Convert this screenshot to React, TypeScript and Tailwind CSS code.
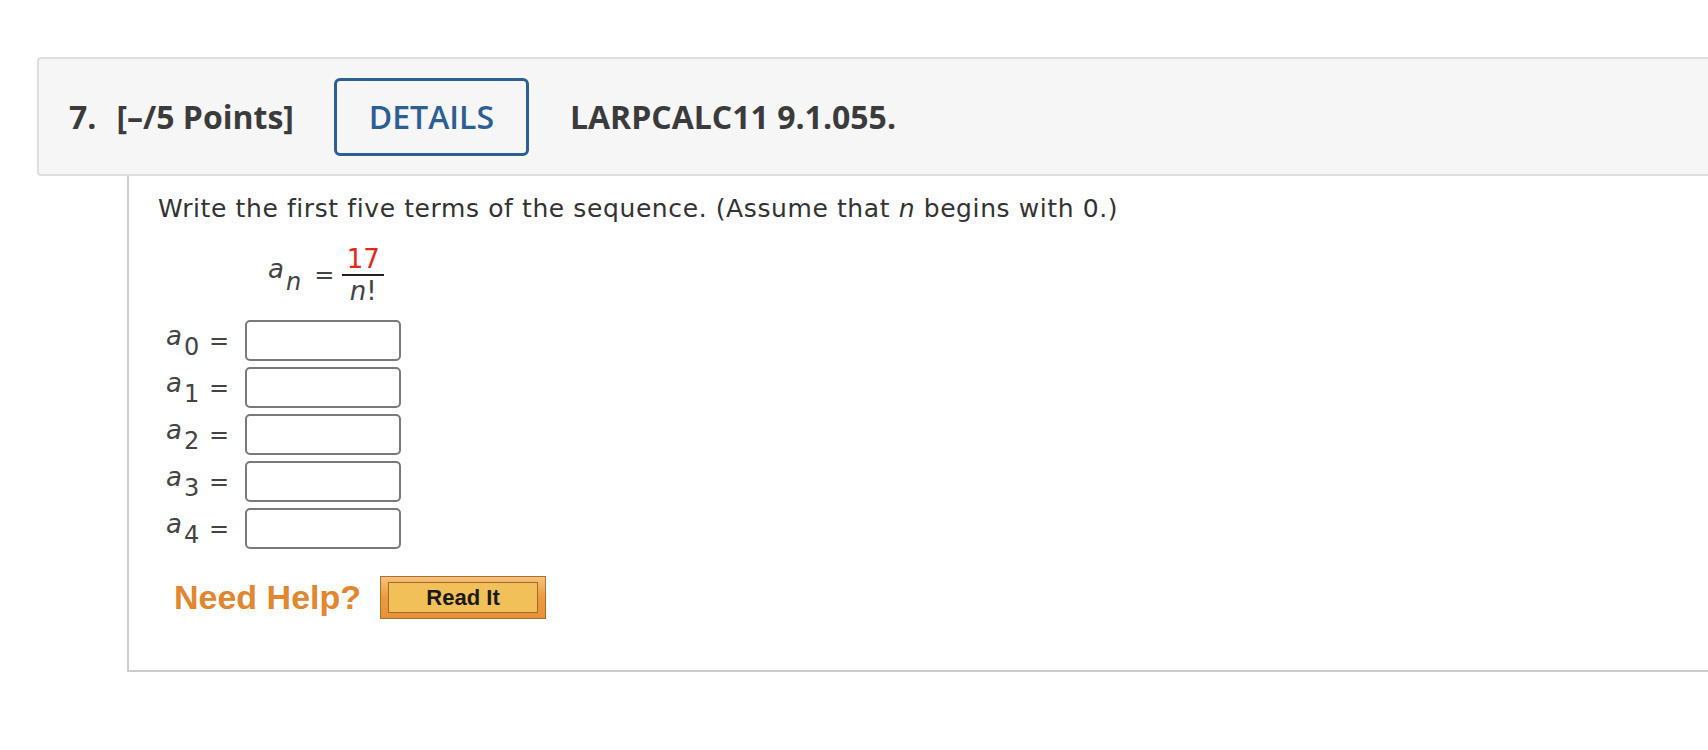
import React from "react";

const terms = [0, 1, 2, 3, 4];

export default function App() {
  return (
    <div className="h-[750px] w-full overflow-hidden bg-white pl-[37px] pt-[57px]">
      {/* question header */}
      <div className="flex h-[119px] w-[1720px] items-center rounded-[4px] border-2 border-[#dedede] bg-[#f6f6f6] pl-[30px] font-['Open_Sans',sans-serif] text-[32px] font-bold text-[#3b3b3b]">
        <span>7.</span>
        <span className="ml-[20px]">[–/5 Points]</span>
        <button
          type="button"
          className="ml-[40px] h-[78px] w-[195px] rounded-[6px] border-[3px] border-[#2c5f93] font-semibold text-[#2c5f93]"
        >
          DETAILS
        </button>
        <span className="ml-[41px]">LARPCALC11 9.1.055.</span>
      </div>

      {/* question body */}
      <div className="ml-[90px] h-[496px] w-[1600px] border-2 border-t-0 border-[#cccccc] pl-[29px] pt-[18px] font-['DejaVu_Sans',sans-serif] text-[#333333]">
        <p className="text-[25px] leading-[30px] tracking-[0.6px]">
          Write the first five terms of the sequence. (Assume that <i>n</i> begins with 0.)
        </p>

        <div className="ml-[110px] mt-[20px] flex items-center text-[26px] text-[#444444]">
          <span className="italic">
            a<span className="ml-[2px] align-[-12px] text-[24px]">n</span>
          </span>
          <span className="ml-[13px] text-[24px]">=</span>
          <span className="ml-[8px] inline-flex flex-col items-center">
            <span className="leading-[30px] text-[#e8271c]">17</span>
            <span className="h-[2px] w-[42px] bg-[#222222]" />
            <span className="leading-[30px] italic">
              n<span className="not-italic">!</span>
            </span>
          </span>
        </div>

        <div className="mt-[14px] flex flex-col gap-[6px] pl-[8px]">
          {terms.map((t) => (
            <div key={t} className="flex h-[41px] items-center text-[26px] text-[#444444]">
              <span className="w-[43px] italic">
                a<span className="ml-[2px] align-[-10px] text-[24px] not-italic">{t}</span>
              </span>
              <span className="text-[24px]">=</span>
              <input
                type="text"
                className="ml-[16px] h-[41px] w-[156px] rounded-[5px] border-2 border-[#7a7a7a] bg-white"
              />
            </div>
          ))}
        </div>

        <div className="mt-[23px] flex items-center pl-[16px]">
          <span className="font-['Liberation_Sans',sans-serif] text-[34px] font-bold text-[#e2862f]">
            Need Help?
          </span>
          <button
            type="button"
            className="ml-[19px] h-[43px] w-[166px] border border-[#b0702a] bg-gradient-to-b from-[#f5c27a] via-[#ec9a3e] to-[#e8923a] px-[7px] py-[5px]"
          >
            <span className="flex h-full w-full items-center justify-center border border-[#a5692a] bg-[#f2c058] font-['Liberation_Sans',sans-serif] text-[22px] font-bold text-[#1a1a1a]">
              Read It
            </span>
          </button>
        </div>
      </div>
    </div>
  );
}
